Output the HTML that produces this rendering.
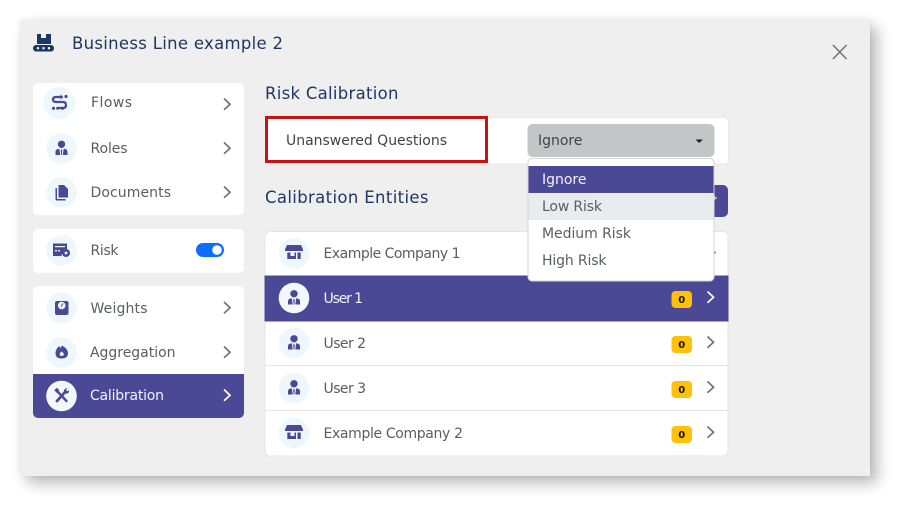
<!DOCTYPE html>
<html><head><meta charset="utf-8"><style>
html,body{margin:0;padding:0;background:#fff;width:906px;height:513px;overflow:hidden}
#p{position:absolute;left:20px;top:20px;width:850px;height:456px;background:#efefef;box-shadow:7px 7px 14px rgba(0,0,0,.28),0 0 6px rgba(0,0,0,.06)}
svg{position:absolute;left:0;top:0}
text{font-family:"DejaVu Sans",sans-serif;font-size:14px;fill:#5a5d61}
.h{font-size:16.5px;fill:#1f3763}
.w{fill:#f2f2fa}
.d{fill:#404448}
.z{font-size:10px;font-weight:bold;fill:#111}
.ch{fill:none;stroke:#6c757d;stroke-width:1.7}
.chw{fill:none;stroke:#fff;stroke-width:1.7}
</style></head><body>
<div id="p"></div>
<svg width="906" height="513" viewBox="0 0 906 513" xmlns="http://www.w3.org/2000/svg">
<defs>
<g id="chev"><path d="M-3 -5.500L3 0.200L-3 5.800"/></g>
<g id="person" fill="#4b4896"><circle cx="0" cy="-4.200" r="3.700"/><path d="M-6 6.500V3Q-6 0.800 -2.200 0.300L-1.300 6.500ZM6 6.500V3Q6 0.800 2.200 0.300L1.300 6.500ZM0 0.500L0.800 2L0.400 6.500H-0.400L-0.800 2Z"/></g>
<g id="store" fill="#4b4896"><path d="M-7 -7.500H7L9 -3V-1.500H-9V-3Z"/><path fill-rule="evenodd" d="M-6.700 0H2V6.500H-6.700ZM-3.500 0V3.500H0.500V0Z"/><rect x="3.500" y="0" width="3.200" height="6.500"/></g>
</defs>

<!-- header -->
<path d="M37 34H41V38H46V34H51V44H37Z" fill="#1c3766"/>
<rect x="33" y="45" width="21" height="6.500" rx="3.200" fill="#1c3766"/>
<g fill="#fff"><circle cx="38" cy="48.200" r="1.200"/><circle cx="43.500" cy="48.200" r="1.200"/><circle cx="49" cy="48.200" r="1.200"/></g>
<text class="h" x="72" y="49" textLength="211">Business Line example 2</text>
<path d="M833 45L846.500 59M846.500 45L833 59" stroke="#767676" stroke-width="1.600" fill="none"/>

<!-- sidebar -->
<rect x="33" y="83" width="211" height="132" rx="5" fill="#fff"/>
<rect x="33" y="229" width="211" height="44" rx="5" fill="#fff"/>
<rect x="33" y="286" width="211" height="132" rx="5" fill="#fff"/>
<path d="M33 374H244V413a5 5 0 0 1-5 5H38a5 5 0 0 1-5-5Z" fill="#4b4896"/>

<g fill="#eef6fe">
<circle cx="59.500" cy="103" r="16"/><circle cx="61.500" cy="148.500" r="15.300"/><circle cx="61.500" cy="192.500" r="15.300"/>
<circle cx="61.500" cy="250.500" r="15.300"/><circle cx="61.500" cy="308" r="15.300"/><circle cx="61.500" cy="352.500" r="15.300"/>
<circle cx="61.500" cy="396" r="15.300" fill="#f4f8fe"/>
</g>

<!-- flows -->
<path d="M62 97H56Q53 97 53 99.500T56 102H63Q66 102 66 105T63 108H57" fill="none" stroke="#4b4896" stroke-width="2.200"/>
<g fill="#4b4896"><path d="M60.500 94.500L63.500 97L60.500 99.500Z"/><circle cx="66" cy="96.500" r="1.600"/><circle cx="53.500" cy="108.300" r="1.600"/><circle cx="57.500" cy="108.300" r="1.400"/><circle cx="62.500" cy="108.300" r="1.600"/></g>
<use href="#person" x="61.500" y="148.500"/>
<!-- documents -->
<g fill="#4b4896"><path d="M58.500 185H64L68 189V197.500H58.500Z"/><path d="M55.500 188H57V199H65.500V200.500H57Q55.500 200.500 55.500 199Z"/></g>
<!-- risk -->
<path d="M53 243.500H67V250H65Q62 251 61.500 256H53Z" fill="#4b4896"/><rect x="55" y="246" width="10" height="1.200" fill="#eef6fe"/><rect x="55" y="250" width="2" height="1.400" fill="#eef6fe"/><rect x="58" y="250" width="2" height="1.400" fill="#eef6fe"/><circle cx="66" cy="253" r="4" fill="#4b4896"/><circle cx="66" cy="253" r="1.400" fill="#eef6fe"/>
<!-- weights -->
<rect x="55" y="301" width="13.500" height="14" rx="2" fill="#4b4896"/><circle cx="61.700" cy="305.500" r="3.800" fill="#eef6fe"/><path d="M61 306.500L63 303.500" stroke="#4b4896" stroke-width="1.100"/>
<!-- aggregation -->
<path d="M59 346Q60 347.500 60.500 348Q61.500 346.500 62 345.500Q68 349 68 353Q68 358.500 61.500 358.500Q55.500 358.500 55.500 353Q55.500 349.500 59 346Z" fill="#4b4896"/>
<path d="M61.500 351.500Q64.500 353.500 63.800 355Q62.500 356.500 60.500 355.800Q59 354.500 60 353Z" fill="#eef6fe"/>
<!-- calibration -->
<g stroke="#4b4896" fill="none" stroke-linecap="round"><path d="M57 391L66.500 401" stroke-width="2.400"/><path d="M66 391L57 401" stroke-width="2.800"/></g>
<rect x="55" y="388.500" width="3.600" height="3.600" transform="rotate(45 56.800 390.300)" fill="#4b4896"/>
<circle cx="66.500" cy="391" r="2.600" fill="#4b4896"/>
<circle cx="67.500" cy="390" r="1.200" fill="#f4f8fe"/>

<text x="91" y="107" textLength="41">Flows</text>
<text x="90.500" y="153" textLength="37">Roles</text>
<text x="90.500" y="197" textLength="80.500">Documents</text>
<text x="90.500" y="255" textLength="28">Risk</text>
<text x="90.500" y="313" textLength="57">Weights</text>
<text x="90" y="357" textLength="85.500">Aggregation</text>
<text class="w" x="90" y="400" textLength="74">Calibration</text>

<use href="#chev" class="ch" x="227" y="104"/>
<use href="#chev" class="ch" x="227" y="148"/>
<use href="#chev" class="ch" x="227" y="192"/>
<use href="#chev" class="ch" x="227" y="307.500"/>
<use href="#chev" class="ch" x="227" y="352"/>
<use href="#chev" class="chw" x="227" y="395"/>

<rect x="196" y="243" width="28" height="14" rx="7" fill="#0d6efd"/>
<circle cx="217" cy="250" r="4.800" fill="#fff"/>

<!-- risk calibration -->
<text class="h" x="265" y="99" textLength="133.500">Risk Calibration</text>
<rect x="265.500" y="117.500" width="463" height="46.500" rx="4" fill="#fff" stroke="#e9e9e9"/>
<rect x="266.500" y="117.500" width="220" height="44" fill="#fff" stroke="#c91313" stroke-width="3"/>
<text class="d" x="286" y="145" textLength="161">Unanswered Questions</text>
<rect x="527.500" y="124" width="187" height="33" rx="5" fill="#c4c5c7"/>
<text class="d" x="538" y="145" textLength="44.500">Ignore</text>
<path d="M695.500 139.500H703L699.200 143Z" fill="#222"/>

<text class="h" x="265" y="203" textLength="163.500">Calibration Entities</text>
<path d="M700 185H723a5 5 0 0 1 5 5V212a5 5 0 0 1-5 5H700Z" fill="#4b4896"/>
<path d="M714.500 195.500V200.500M712 198H717" stroke="#dcdcf0" stroke-width="1.200"/>

<!-- list -->
<rect x="265" y="231.500" width="463" height="224.500" rx="5" fill="#fff" stroke="#e4e4e6"/>
<rect x="264.500" y="275.500" width="464" height="46" fill="#4b4896"/>
<path d="M265 365.500H728M265 410.500H728" stroke="#e4e4e6"/>

<circle cx="294" cy="253.500" r="15.300" fill="#eef6fe"/>
<circle cx="294" cy="298" r="15.300" fill="#f4f8fe"/>
<circle cx="294" cy="343" r="15.300" fill="#eef6fe"/>
<circle cx="294" cy="388" r="15.300" fill="#eef6fe"/>
<circle cx="294" cy="433" r="15.300" fill="#eef6fe"/>
<use href="#store" x="294" y="252.500"/>
<use href="#person" x="294" y="298"/>
<use href="#person" x="294" y="343"/>
<use href="#person" x="294" y="388"/>
<use href="#store" x="294" y="432.500"/>

<text x="323.500" y="258" textLength="137">Example Company 1</text>
<text class="w" x="323.500" y="303" textLength="39.500">User 1</text>
<text x="323.500" y="348" textLength="42.500">User 2</text>
<text x="323.500" y="393" textLength="42.500">User 3</text>
<text x="323.500" y="438" textLength="139.500">Example Company 2</text>

<g fill="#ffc107">
<rect x="671.500" y="291" width="20.500" height="17" rx="4"/>
<rect x="671.500" y="336" width="20.500" height="17" rx="4"/>
<rect x="671.500" y="381" width="20.500" height="17" rx="4"/>
<rect x="671.500" y="426" width="20.500" height="17" rx="4"/>
</g>
<g text-anchor="middle">
<text class="z" x="681.700" y="303">0</text>
<text class="z" x="681.700" y="348">0</text>
<text class="z" x="681.700" y="393">0</text>
<text class="z" x="681.700" y="438">0</text>
</g>
<use href="#chev" class="chw" x="710.500" y="297"/>
<use href="#chev" class="ch" x="710.500" y="342"/>
<use href="#chev" class="ch" x="710.500" y="387"/>
<use href="#chev" class="ch" x="710.500" y="432"/>
<path d="M714.500 251.500L715.500 252.500L714.500 253.500" fill="none" stroke="#6c757d"/>

<!-- dropdown -->
<rect x="528" y="158.500" width="186" height="122.500" rx="4" fill="#fff" stroke="#d5d5d8"/>
<rect x="528.500" y="166" width="185" height="27" fill="#4b4896"/>
<rect x="528.500" y="193" width="185" height="27" fill="#e9ecef"/>
<text class="w" x="542" y="184" textLength="44.500">Ignore</text>
<text x="542" y="211" textLength="60">Low Risk</text>
<text x="542" y="238" textLength="89">Medium Risk</text>
<text x="542" y="265" textLength="64.500">High Risk</text>
</svg>
</body></html>
